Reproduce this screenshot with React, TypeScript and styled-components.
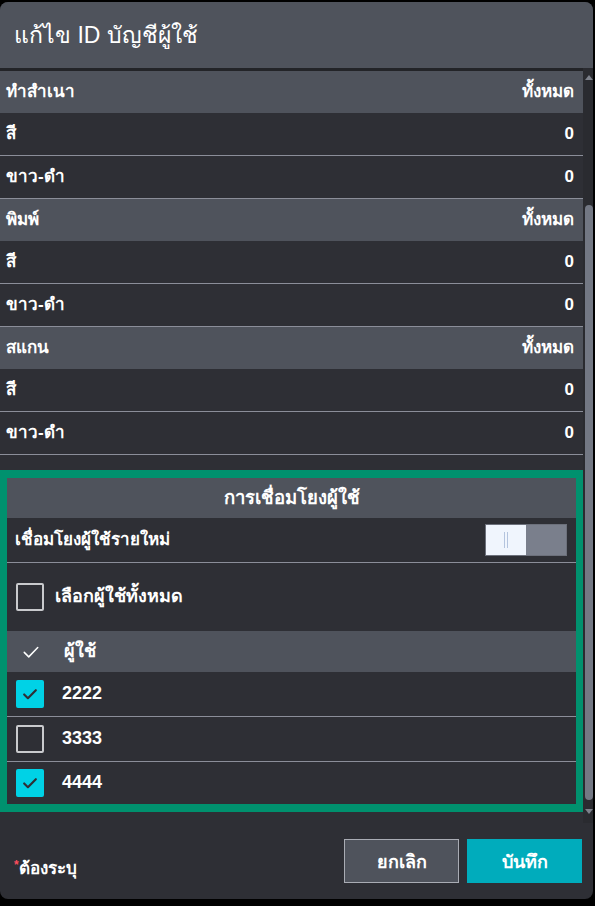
import React from "react";
import styled, { createGlobalStyle } from "styled-components";

const GlobalStyle = createGlobalStyle`
  html, body {
    margin: 0;
    padding: 0;
    background: #000;
  }
  body {
    font-family: "Liberation Sans", "DejaVu Sans", sans-serif;
    color: #fff;
    line-height: 1.4;
  }
  * { box-sizing: border-box; }
`;

const Dialog = styled.div`
  width: 593px;
  height: 897px;
  margin-top: 2px;
  background: #2e2f35;
  border-radius: 8px;
  display: flex;
  flex-direction: column;
  overflow: hidden;
`;

const Header = styled.div`
  height: 66px;
  flex: none;
  background: #4f535c;
  display: flex;
  align-items: center;
  padding: 0 14px;
  font-size: 23px;
  color: #fff;
`;

const Body = styled.div`
  flex: 1;
  min-height: 0;
  display: flex;
`;

const Viewport = styled.div`
  flex: 1;
  min-width: 0;
  overflow: hidden;
  padding-bottom: 11px;
`;

const Scrollbar = styled.div`
  width: 10px;
  flex: none;
  background: #2a2b30;
  display: flex;
  flex-direction: column;
`;

const ArrowButton = styled.div<{ $down?: boolean }>`
  height: 17px;
  flex: none;
  display: flex;
  justify-content: center;
  align-items: ${(p) => (p.$down ? "flex-start" : "flex-end")};
  padding: ${(p) => (p.$down ? "3px 0 0 2px" : "0 0 5px 2px")};
`;

const Track = styled.div`
  flex: 1;
  display: flex;
  flex-direction: column;
  justify-content: flex-end;
  padding: 0 0 6px 2px;
`;

const Thumb = styled.div`
  height: 595px;
  background: #737884;
  border-radius: 4px;
`;

const TableTop = styled.div`
  border-top: 3px solid #232428;
`;

const GroupHeader = styled.div`
  height: 42px;
  background: #4f535c;
  display: flex;
  align-items: center;
  justify-content: space-between;
  padding: 0 9px 0 6px;
  font-size: 17px;
  font-weight: bold;
`;

const DataRow = styled.div`
  height: 43px;
  border-bottom: 1px solid #8b8e99;
  display: flex;
  align-items: center;
  justify-content: space-between;
  padding: 0 9px 0 6px;
  font-size: 17px;
  font-weight: bold;
`;

const LinkBox = styled.div`
  margin-top: 15px;
  border-style: solid;
  border-color: #00916e;
  border-width: 8px 7px;
`;

const LinkTitle = styled.div`
  height: 40px;
  background: #4f535c;
  display: flex;
  align-items: center;
  justify-content: center;
  font-size: 18.5px;
  font-weight: bold;
`;

const ToggleRow = styled.div`
  height: 45px;
  border-bottom: 1px solid #8b8e99;
  display: flex;
  align-items: center;
  justify-content: space-between;
  padding: 0 9px 0 8px;
  font-size: 17px;
  font-weight: bold;
`;

const Toggle = styled.div`
  width: 82px;
  height: 32px;
  border: 1px solid #6c707b;
  background: #7a7f8c;
  display: flex;
`;

const Knob = styled.div`
  width: 40px;
  height: 100%;
  background: #f0f5fd;
  display: flex;
  align-items: center;
  justify-content: center;
  gap: 2px;
`;

const KnobLine = styled.span`
  width: 1px;
  height: 16px;
  background: #b4c4de;
`;

const SelectAllRow = styled.div`
  height: 68px;
  display: flex;
  align-items: center;
  gap: 11px;
  padding-left: 9px;
  font-size: 18px;
  font-weight: bold;
`;

const UserHeader = styled.div`
  height: 41px;
  background: #4f535c;
  display: flex;
  align-items: center;
  padding-left: 15px;
  gap: 24px;
  font-size: 18px;
  font-weight: bold;
`;

const UserRow = styled.div<{ $last?: boolean }>`
  height: ${(p) => (p.$last ? "42px" : "45px")};
  border-bottom: ${(p) => (p.$last ? "none" : "1px solid #8b8e99")};
  display: flex;
  align-items: center;
  gap: 18px;
  padding-left: 9px;
  font-size: 18px;
  font-weight: bold;
`;

const Box = styled.span<{ $checked?: boolean }>`
  width: 28px;
  height: 28px;
  flex: none;
  border-radius: 2px;
  border: 2px solid ${(p) => (p.$checked ? "#00d2e6" : "#c9cacd")};
  background: ${(p) => (p.$checked ? "#00d2e6" : "transparent")};
  display: flex;
  align-items: center;
  justify-content: center;
`;

const Footer = styled.div`
  height: 76px;
  flex: none;
  display: flex;
  align-items: center;
  justify-content: space-between;
  padding: 0 11px 0 14px;
`;

const Required = styled.div`
  align-self: flex-end;
  margin-bottom: 18px;
  font-size: 17px;
  font-weight: bold;
`;

const Star = styled.span`
  color: #ff4d5e;
  font-size: 12px;
  vertical-align: top;
`;

const Buttons = styled.div`
  display: flex;
  gap: 8px;
`;

const Button = styled.button<{ $primary?: boolean }>`
  width: 115px;
  height: 44px;
  margin: 0;
  border: ${(p) => (p.$primary ? "none" : "1px solid #a9acb4")};
  background: ${(p) => (p.$primary ? "#00acbc" : "#4f535c")};
  color: #fff;
  font-family: inherit;
  font-size: 18px;
  font-weight: bold;
  cursor: pointer;
`;

const CheckMark = ({ color, size }: { color: string; size: number }) => (
  <svg width={size} height={size} viewBox="0 0 24 24" fill="none">
    <path d="M5 12.5l4.5 4.5L19 7.5" stroke={color} strokeWidth={2.6} strokeLinecap="round" strokeLinejoin="round" />
  </svg>
);

const HeaderCheck = () => (
  <svg width="18" height="18" viewBox="0 0 24 24" fill="none">
    <path d="M3 12.5l6 6L21 6" stroke="#fff" strokeWidth={2} strokeLinecap="round" strokeLinejoin="round" />
  </svg>
);

const Arrow = ({ down }: { down?: boolean }) => (
  <svg width="8" height="5" viewBox="0 0 8 5">
    <path d={down ? "M0 0h8L4 5z" : "M0 5h8L4 0z"} fill="#7d818b" />
  </svg>
);

const groups = ["ทำสำเนา", "พิมพ์", "สแกน"];

const users = [
  { id: "2222", checked: true },
  { id: "3333", checked: false },
  { id: "4444", checked: true },
];

export default function App() {
  return (
    <>
      <GlobalStyle />
      <Dialog>
        <Header>แก้ไข ID บัญชีผู้ใช้</Header>
        <Body>
          <Viewport>
            <TableTop>
              {groups.map((g) => (
                <React.Fragment key={g}>
                  <GroupHeader>
                    <span>{g}</span>
                    <span>ทั้งหมด</span>
                  </GroupHeader>
                  <DataRow>
                    <span>สี</span>
                    <span>0</span>
                  </DataRow>
                  <DataRow>
                    <span>ขาว-ดำ</span>
                    <span>0</span>
                  </DataRow>
                </React.Fragment>
              ))}
            </TableTop>
            <LinkBox>
              <LinkTitle>การเชื่อมโยงผู้ใช้</LinkTitle>
              <ToggleRow>
                <span>เชื่อมโยงผู้ใช้รายใหม่</span>
                <Toggle>
                  <Knob>
                    <KnobLine />
                    <KnobLine />
                  </Knob>
                </Toggle>
              </ToggleRow>
              <SelectAllRow>
                <Box />
                <span>เลือกผู้ใช้ทั้งหมด</span>
              </SelectAllRow>
              <UserHeader>
                <HeaderCheck />
                <span>ผู้ใช้</span>
              </UserHeader>
              {users.map((u, i) => (
                <UserRow key={u.id} $last={i === users.length - 1}>
                  <Box $checked={u.checked}>
                    {u.checked && <CheckMark color="#2e2f35" size={20} />}
                  </Box>
                  <span>{u.id}</span>
                </UserRow>
              ))}
            </LinkBox>
          </Viewport>
          <Scrollbar>
            <ArrowButton>
              <Arrow />
            </ArrowButton>
            <Track>
              <Thumb />
            </Track>
            <ArrowButton $down>
              <Arrow down />
            </ArrowButton>
          </Scrollbar>
        </Body>
        <Footer>
          <Required>
            <Star>*</Star>ต้องระบุ
          </Required>
          <Buttons>
            <Button>ยกเลิก</Button>
            <Button $primary>บันทึก</Button>
          </Buttons>
        </Footer>
      </Dialog>
    </>
  );
}
